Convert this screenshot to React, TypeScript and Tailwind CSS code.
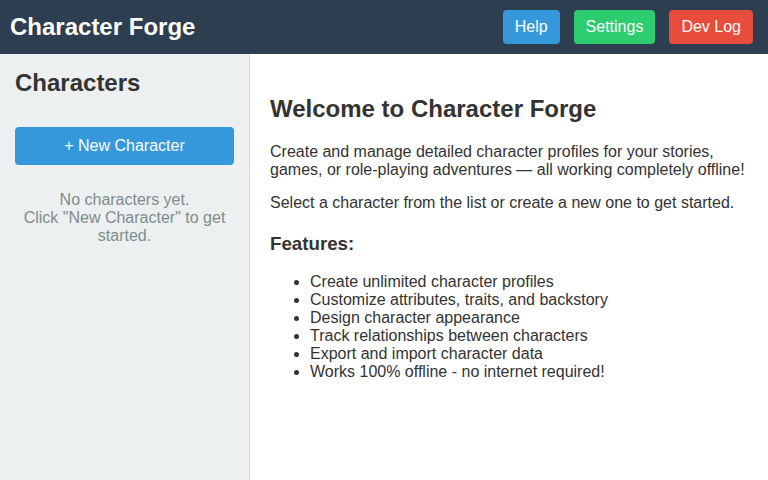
const features = [
  "Create unlimited character profiles",
  "Customize attributes, traits, and backstory",
  "Design character appearance",
  "Track relationships between characters",
  "Export and import character data",
  "Works 100% offline - no internet required!",
];

export default function App() {
  return (
    <div className="flex h-screen flex-col font-['Liberation_Sans',Arial,sans-serif] text-[#333]">
      <header className="flex h-[54px] shrink-0 items-center justify-between bg-[#2c3e50] pl-[10px] pr-[15px]">
        <h1 className="text-2xl font-bold text-white">Character Forge</h1>
        <div className="flex gap-[14px]">
          <button className="h-[34px] rounded bg-[#3498db] px-3 text-base text-white">Help</button>
          <button className="h-[34px] rounded bg-[#2ecc71] px-3 text-base text-white">Settings</button>
          <button className="h-[34px] rounded bg-[#e74c3c] px-3 text-base text-white">Dev Log</button>
        </div>
      </header>

      <div className="flex flex-1">
        <aside className="w-[250px] shrink-0 border-r border-[#ddd] bg-[#ecf0f1] p-[15px]">
          <h2 className="text-2xl leading-[28px] font-bold">Characters</h2>
          <button className="mt-[30px] h-[38px] w-full rounded bg-[#3498db] text-base text-white">
            + New Character
          </button>
          <div className="mt-[26px] text-center text-base leading-[18px] text-[#7f8c8d]">
            <p>No characters yet.</p>
            <p>Click "New Character" to get started.</p>
          </div>
        </aside>

        <main className="flex-1 px-5 pt-5">
          <h1 className="mt-[21px] text-2xl leading-[28px] font-bold">Welcome to Character Forge</h1>
          <p className="mt-5 text-base leading-[18px]">
            Create and manage detailed character profiles for your stories, games, or role-playing adventures — all
            working completely offline!
          </p>
          <p className="mt-[15px] text-base leading-[18px]">
            Select a character from the list or create a new one to get started.
          </p>
          <h3 className="mt-[21px] text-[18.72px] leading-[22px] font-bold">Features:</h3>
          <ul className="mt-[18px] list-disc pl-10 text-base leading-[18px]">
            {features.map((f) => (
              <li key={f}>{f}</li>
            ))}
          </ul>
        </main>
      </div>
    </div>
  );
}
